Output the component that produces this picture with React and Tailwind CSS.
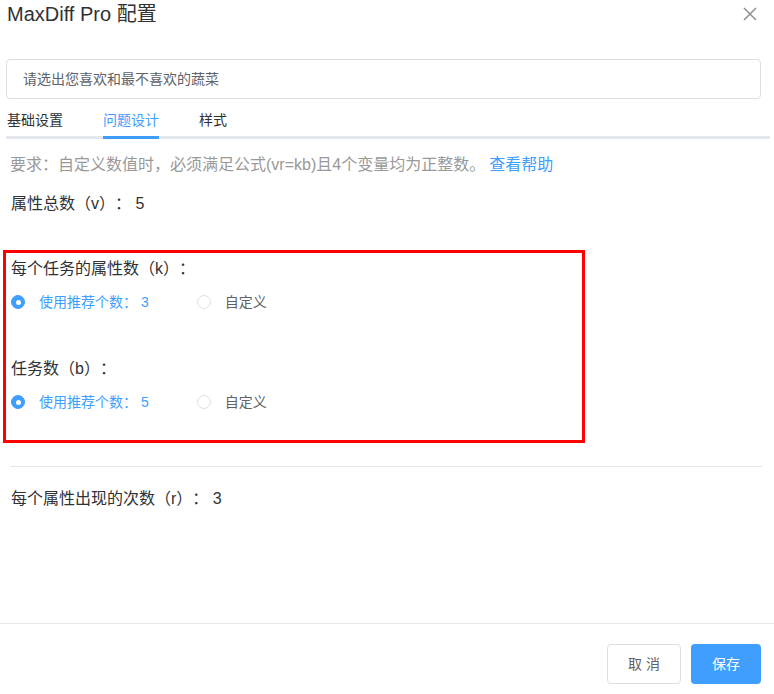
import { useState } from "react";

function Radio({ checked, label, onSelect, className = "" }) {
  return (
    <button type="button" onClick={onSelect} className={`flex h-[20px] items-center ${className}`}>
      <span
        className={`flex h-[14px] w-[14px] items-center justify-center rounded-full border ${
          checked ? "border-[#409eff] bg-[#409eff]" : "border-[#dcdfe6] bg-white"
        }`}
      >
        {checked && <span className="h-[5px] w-[5px] rounded-full bg-white" />}
      </span>
      <span className={`ml-[14px] text-[14px] leading-[20px] ${checked ? "text-[#409eff]" : "text-[#606266]"}`}>
        {label}
      </span>
    </button>
  );
}

function CountField({ title, recommended, value, onChange, className = "" }) {
  return (
    <div className={className}>
      <div className="text-[16px] leading-[24px] text-[#303133]">{title}</div>
      <div className="mt-[11px] flex items-center">
        <Radio
          checked={value === "auto"}
          label={`使用推荐个数： ${recommended}`}
          onSelect={() => onChange("auto")}
          className="mr-[48px]"
        />
        <Radio checked={value === "custom"} label="自定义" onSelect={() => onChange("custom")} />
      </div>
    </div>
  );
}

const TABS = ["基础设置", "问题设计", "样式"];

export default function App() {
  const [tab, setTab] = useState(1);
  const [k, setK] = useState("auto");
  const [b, setB] = useState("auto");

  return (
    <div className="flex h-[694px] w-[774px] flex-col bg-white font-['Liberation_Sans','Noto_Sans_CJK_SC',sans-serif] [text-spacing-trim:space-all]">
      <div className="flex-1 pl-[6px]">
        <div className="flex h-[28px] items-center justify-between pr-[17px]">
          <h1 className="pl-[1px] text-[20px] leading-[28px] text-[#303133]">MaxDiff Pro 配置</h1>
          <button type="button" className="text-[#909399]">
            <svg width="14" height="14" viewBox="0 0 14 14" fill="none" stroke="currentColor" strokeWidth="1.6">
              <path d="M1 1l12 12M13 1L1 13" />
            </svg>
          </button>
        </div>

        <div className="mt-[31px] flex h-[40px] w-[755px] items-center rounded-[4px] border border-[#dcdfe6] px-[16px] text-[14px] text-[#606266]">
          请选出您喜欢和最不喜欢的蔬菜
        </div>

        <div className="flex h-[40px] w-[764px] gap-[40px] border-b-[3px] border-[#e4e7ed] pl-[1px]">
          {TABS.map((name, i) => (
            <button
              key={name}
              type="button"
              onClick={() => setTab(i)}
              className={`-mb-[3px] h-[40px] border-b-[3px] pt-[4px] text-[14px] leading-[20px] ${
                tab === i ? "border-[#409eff] text-[#409eff]" : "border-transparent text-[#303133]"
              }`}
            >
              {name}
            </button>
          ))}
        </div>

        <div className="pl-[4px]">
          <p className="mt-[14px] text-[16px] leading-[24px] text-[#999999]">
            要求：自定义数值时，必须满足公式(vr=kb)且4个变量均为正整数。
            <a className="ml-[4px] text-[#409eff]">查看帮助</a>
          </p>
          <div className="mt-[15px] pl-[1px] text-[16px] leading-[24px] text-[#303133]">属性总数（v）： 5</div>
        </div>

        <div className="-ml-[3px] mt-[34px] w-[582px] border-[3px] border-[#ff0000] pb-[28px] pl-[5px] pt-[4px]">
          <CountField title="每个任务的属性数（k）：" recommended={3} value={k} onChange={setK} />
          <CountField title="任务数（b）：" recommended={5} value={b} onChange={setB} className="mt-[45px]" />
        </div>

        <div className="ml-[4px] mt-[23px] h-px w-[752px] bg-[#e4e7ed]" />
        <div className="mt-[20px] pl-[5px] text-[16px] leading-[24px] text-[#303133]">每个属性出现的次数（r）： 3</div>
      </div>

      <div className="flex justify-end gap-[10px] border-t border-[#e4e7ed] pb-[10px] pr-[13px] pt-[20px]">
        <button
          type="button"
          className="h-[40px] w-[74px] rounded-[4px] border border-[#dcdfe6] bg-white text-[14px] text-[#606266]"
        >
          取 消
        </button>
        <button type="button" className="h-[40px] w-[70px] rounded-[4px] bg-[#409eff] text-[14px] text-white">
          保存
        </button>
      </div>
    </div>
  );
}
